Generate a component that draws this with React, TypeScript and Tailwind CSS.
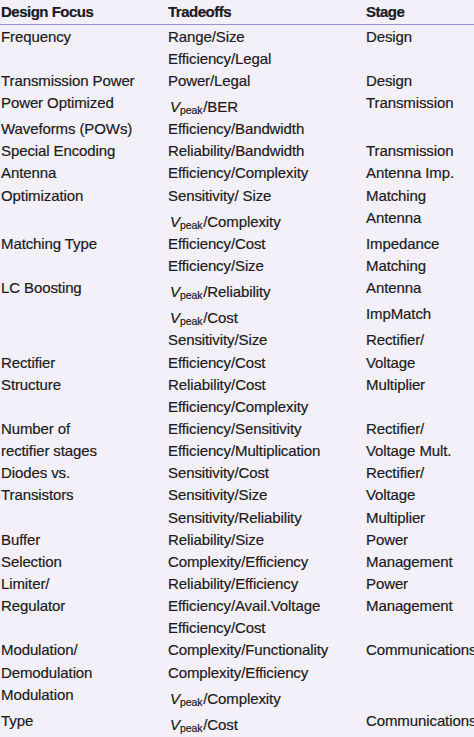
import React from "react";

type Cell = string | { v: string };
type Row = [string, Cell, string];

const rows: Row[] = [
  ["Frequency", "Range/Size", "Design"],
  ["", "Efficiency/Legal", ""],
  ["Transmission Power", "Power/Legal", "Design"],
  ["Power Optimized", { v: "/BER" }, "Transmission"],
  ["Waveforms (POWs)", "Efficiency/Bandwidth", ""],
  ["Special Encoding", "Reliability/Bandwidth", "Transmission"],
  ["Antenna", "Efficiency/Complexity", "Antenna Imp."],
  ["Optimization", "Sensitivity/ Size", "Matching"],
  ["", { v: "/Complexity" }, "Antenna"],
  ["Matching Type", "Efficiency/Cost", "Impedance"],
  ["", "Efficiency/Size", "Matching"],
  ["LC Boosting", { v: "/Reliability" }, "Antenna"],
  ["", { v: "/Cost" }, "ImpMatch"],
  ["", "Sensitivity/Size", "Rectifier/"],
  ["Rectifier", "Efficiency/Cost", "Voltage"],
  ["Structure", "Reliability/Cost", "Multiplier"],
  ["", "Efficiency/Complexity", ""],
  ["Number of", "Efficiency/Sensitivity", "Rectifier/"],
  ["rectifier stages", "Efficiency/Multiplication", "Voltage Mult."],
  ["Diodes vs.", "Sensitivity/Cost", "Rectifier/"],
  ["Transistors", "Sensitivity/Size", "Voltage"],
  ["", "Sensitivity/Reliability", "Multiplier"],
  ["Buffer", "Reliability/Size", "Power"],
  ["Selection", "Complexity/Efficiency", "Management"],
  ["Limiter/", "Reliability/Efficiency", "Power"],
  ["Regulator", "Efficiency/Avail.Voltage", "Management"],
  ["", "Efficiency/Cost", ""],
  ["Modulation/", "Complexity/Functionality", "Communications"],
  ["Demodulation", "Complexity/Efficiency", ""],
  ["Modulation", { v: "/Complexity" }, ""],
  ["Type", { v: "/Cost" }, "Communications"],
];

function Vpeak({ rest }: { rest: string }) {
  return (
    <span className="flex items-baseline pl-[2px]">
      <span className="italic">V</span>
      <span className="text-[10.5px] relative top-[2px] pr-[1px]">peak</span>
      <span>{rest}</span>
    </span>
  );
}

export default function App() {
  return (
    <div
      className="w-[474px] h-[737px] overflow-hidden bg-[#f3f0fa] text-[#1c1b20] whitespace-nowrap [-webkit-text-stroke:0.2px_#1c1b20]"
      style={{ fontFamily: '"Liberation Sans", Arial, sans-serif' }}
    >
      <div className="flex h-[25px] items-center font-bold text-[15px] tracking-[-0.5px] text-[#1a1a22] border-b-[1.5px] border-[#9c92d0]">
        <div className="w-[168px] pl-[1px]">Design Focus</div>
        <div className="w-[197px]">Tradeoffs</div>
        <div className="flex-1 pl-[1px]">Stage</div>
      </div>
      <div className="flex flex-col text-[15px] tracking-[-0.1px]">
        {rows.map((r, i) => {
          const tall = typeof r[1] !== "string";
          return (
            <div
              key={i}
              className={
                "flex items-start leading-none " +
                (tall ? "h-[26.15px]" : "h-[22.15px]")
              }
            >
              <div className="w-[168px] shrink-0 h-[22.15px] flex items-center pl-[1px]">
                {r[0]}
              </div>
              {typeof r[1] === "string" ? (
                <div className="w-[197px] shrink-0 h-[22.15px] flex items-center">
                  {r[1]}
                </div>
              ) : (
                <div className="w-[197px] shrink-0 h-[22.15px] flex items-center pt-[8px]">
                  <Vpeak rest={r[1].v} />
                </div>
              )}
              <div className="flex-1 h-[22.15px] flex items-center pl-[1px]">
                {r[2]}
              </div>
            </div>
          );
        })}
      </div>
    </div>
  );
}
